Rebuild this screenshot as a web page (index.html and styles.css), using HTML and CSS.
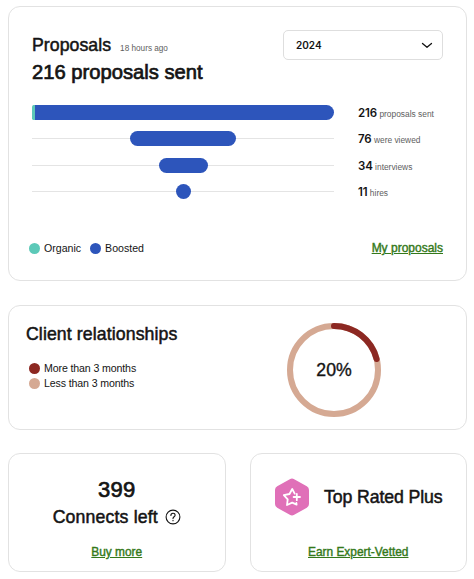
FILE: index.html
```html
<!DOCTYPE html>
<html lang="en">
<head>
    <meta charset="UTF-8">
    <meta name="viewport" content="width=device-width, initial-scale=1.0">
    <title>My stats</title>
    <link rel="stylesheet" href="styles.css">
</head>
<body>
    <main class="page">
        <section class="card proposals">
            <header class="proposals-header">
                <div>
                    <div class="title-row">
                        <h2>Proposals</h2>
                        <span class="updated">18 hours ago</span>
                    </div>
                    <p class="total">216 proposals sent</p>
                </div>
                <button class="year-select" type="button">
                    <span>2024</span>
                    <svg class="chevron" viewBox="0 0 12 7" width="12" height="7">
                        <path d="M1.5 1.5 6 5.3 10.5 1.5"/>
                    </svg>
                </button>
            </header>

            <div class="funnel">
                <div class="track"><div class="bar full" style="width: 302px"></div></div>
                <p class="stat"><b>216</b> proposals sent</p>
                <div class="track"><div class="bar" style="width: 106px"></div></div>
                <p class="stat"><b>76</b> were viewed</p>
                <div class="track"><div class="bar" style="width: 49px"></div></div>
                <p class="stat"><b>34</b> interviews</p>
                <div class="track"><div class="bar" style="width: 15px"></div></div>
                <p class="stat"><b>11</b> hires</p>
            </div>

            <footer class="proposals-footer">
                <ul class="legend">
                    <li><i class="dot organic"></i>Organic</li>
                    <li><i class="dot boosted"></i>Boosted</li>
                </ul>
                <a class="link" href="#">My proposals</a>
            </footer>
        </section>

        <section class="card clients">
            <div class="clients-info">
                <h2>Client relationships</h2>
                <ul class="legend stacked">
                    <li><i class="dot long"></i>More than 3 months</li>
                    <li><i class="dot short"></i>Less than 3 months</li>
                </ul>
            </div>
            <svg class="donut" viewBox="0 0 96 96" width="96" height="96">
                <circle class="ring" cx="48" cy="48" r="44"/>
                <path class="ring-value" d="M48 4A44 44 0 0 1 90.6 37"/>
                <text x="48" y="54.3" text-anchor="middle">20%</text>
            </svg>
        </section>

        <div class="row">
            <section class="card connects">
                <p class="connects-count">399</p>
                <div class="connects-label">
                    <h2>Connects left</h2>
                    <svg class="help" viewBox="0 0 16 16" width="16" height="16">
                        <circle cx="8" cy="8" r="6.9"/>
                        <path d="M5.9 6.4C5.9 5.1 6.8 4.3 8 4.3S10.1 5.1 10.1 6.2C10.1 7.7 8 7.8 8 9.4"/>
                        <path d="M8 11.3V11.7"/>
                    </svg>
                </div>
                <a class="link small" href="#">Buy more</a>
            </section>

            <section class="card rated">
                <div class="badge-row">
                    <svg class="badge" viewBox="0 0 36 38" width="36" height="38">
                        <path class="hexagon" d="M15.8 1.2Q18 0 20.2 1.2L32.8 8.2Q35 9.4 35 12V26Q35 28.6 32.8 29.8L20.2 36.8Q18 38 15.8 36.8L3.2 29.8Q1 28.6 1 26V12Q1 9.4 3.2 8.2Z"/>
                        <path class="star" d="M20.7 15.6 18.2 11 15.5 16 9.8 17.1 13.7 21.4 13 27 18.2 24.6 22.6 26.6 22.4 25M22.8 15.8V22.2M19.6 19H26"/>
                    </svg>
                    <h2>Top Rated Plus</h2>
                </div>
                <a class="link small" href="#">Earn Expert-Vetted</a>
            </section>
        </div>
    </main>
</body>
</html>
```

FILE: styles.css
```css
* {
    box-sizing: border-box;
}
body {
    margin: 0;
    background-color: #fff;
    color: #141414;
    font-family: "Liberation Sans", Arial, sans-serif;
}
h2, p, ul {
    margin: 0;
    padding: 0;
}
h2 {
    font-size: 17.7px;
    font-weight: 400;
    line-height: 22px;
    white-space: nowrap;
    -webkit-text-stroke: 0.5px currentColor;
}
.page {
    display: flex;
    flex-direction: column;
    gap: 24px;
    padding: 6px 7px 0 8px;
}
.card {
    border: 1px solid #e2e2e2;
    border-radius: 12px;
    background-color: #fff;
}

/* proposals */
.proposals {
    height: 275px;
    padding: 23px 23px 0 23px;
}
.proposals-header {
    display: flex;
    justify-content: space-between;
}
.title-row {
    display: flex;
    align-items: baseline;
    gap: 9px;
    padding-top: 4px;
}
.title-row h2 {
    letter-spacing: 0.05px;
}
.updated {
    color: #5e5e5e;
    font-size: 8.2px;
}
.total {
    font-size: 20.2px;
    line-height: 26px;
    margin-top: 3px;
    -webkit-text-stroke: 0.7px currentColor;
}
.year-select {
    display: flex;
    align-items: center;
    justify-content: space-between;
    width: 160px;
    height: 30px;
    padding: 0 9px 0 12px;
    border: 1px solid #dedede;
    border-radius: 5px;
    background-color: #fff;
    color: #141414;
    font: 600 10px Inter, sans-serif;
}
.chevron {
    fill: none;
    stroke: #141414;
    stroke-width: 1.3;
    stroke-linecap: round;
    stroke-linejoin: round;
}
.funnel {
    display: grid;
    grid-template-columns: 302px 1fr;
    grid-auto-rows: 26.4px;
    column-gap: 24px;
    align-items: center;
    margin-top: 14.4px;
}
.track {
    display: flex;
    align-items: center;
    justify-content: center;
    height: 15px;
    background: linear-gradient(#e4e4e4, #e4e4e4) center / 100% 1px no-repeat;
}
.bar {
    height: 15px;
    border-radius: 8px;
    background-color: #2d55bb;
}
.bar.full {
    border-left: 3px solid #5cc9b8;
    border-radius: 2px 8px 8px 2px;
}
.stat {
    padding-top: 3px;
    color: #5e5e5e;
    font-size: 8.4px;
    line-height: 16px;
    white-space: nowrap;
}
.stat b {
    color: #141414;
    font: 600 11.5px Inter, sans-serif;
    letter-spacing: -0.1px;
}
.proposals-footer {
    display: flex;
    align-items: center;
    justify-content: space-between;
    margin: 36px 0 0 -3px;
}
.legend {
    display: flex;
    gap: 9px;
    list-style: none;
    font-size: 10.6px;
    line-height: 15px;
}
.legend li {
    display: flex;
    align-items: center;
    gap: 4px;
}
.legend.stacked {
    flex-direction: column;
    gap: 0;
    letter-spacing: -0.12px;
}
.dot {
    width: 11px;
    height: 11px;
    border-radius: 50%;
}
.organic {
    background-color: #5cc9b8;
}
.boosted {
    background-color: #2d55bb;
}
.long {
    background-color: #8c2822;
}
.short {
    background-color: #d5a993;
}
.link {
    color: #34791a;
    font-size: 12px;
    text-decoration: underline;
    text-underline-offset: 1px;
    -webkit-text-stroke: 0.4px currentColor;
}
.link.small {
    font-size: 11.9px;
}

/* client relationships */
.clients {
    display: flex;
    justify-content: space-between;
    height: 125px;
    padding: 16px 84px 0 17px;
}
.clients-info h2 {
    padding-top: 1px;
    letter-spacing: 0.1px;
}
.clients-info .legend {
    margin: 16px 0 0 3px;
}
.donut circle, .donut path {
    fill: none;
    stroke-width: 6;
}
.ring {
    stroke: #d5a993;
}
.ring-value {
    stroke: #8c2822;
    stroke-linecap: round;
}
.donut text {
    font-size: 17.7px;
    fill: #141414;
    stroke: #141414;
    stroke-width: 0.35px;
}

/* bottom cards */
.row {
    display: grid;
    grid-template-columns: 1fr 1fr;
    gap: 24px;
    margin-top: -1px;
}
.connects, .rated {
    display: flex;
    flex-direction: column;
    align-items: center;
    height: 119px;
}
.connects-count {
    font-size: 22px;
    line-height: 26px;
    margin-top: 23px;
    letter-spacing: 0.2px;
    -webkit-text-stroke: 0.7px currentColor;
}
.connects-label {
    display: flex;
    align-items: center;
    gap: 7px;
    margin-top: 3px;
}
.connects-label h2 {
    letter-spacing: 0.15px;
}
.help {
    fill: none;
    stroke: #141414;
    stroke-width: 1.1;
    stroke-linecap: round;
}
.connects .link {
    margin-top: 17px;
}
.badge-row {
    display: flex;
    align-items: center;
    gap: 14px;
    margin-top: 24px;
}
.badge-row h2 {
    letter-spacing: -0.1px;
}
.hexagon {
    fill: #e070b8;
}
.star {
    fill: none;
    stroke: #fff;
    stroke-width: 1.8;
    stroke-linejoin: round;
    stroke-linecap: round;
}
.rated .link {
    margin-top: 29px;
}
```
